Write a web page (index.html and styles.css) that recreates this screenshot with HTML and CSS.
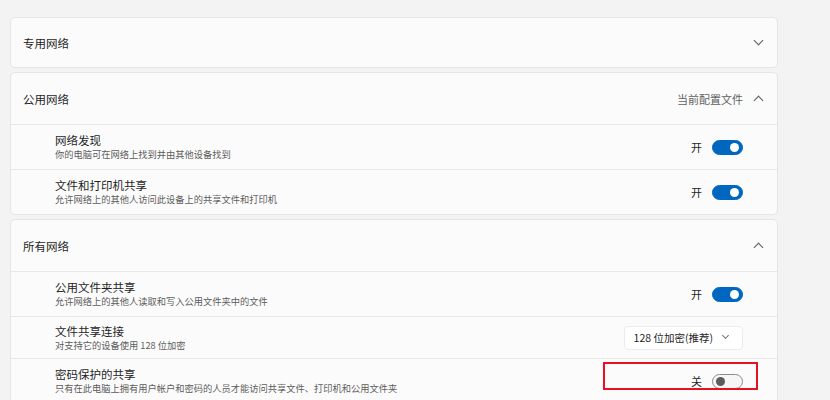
FILE: index.html
```html
<!DOCTYPE html>
<html lang="zh-CN">
  <head>
    <meta charset="UTF-8" />
    <meta name="viewport" content="width=device-width, initial-scale=1.0" />
    <title>高级共享设置</title>
    <link rel="stylesheet" href="styles.css">
  </head>
  <body>
    <div class="page">
      <div class="card">
        <div class="card-head first">
          <span class="head-title">专用网络</span>
          <span class="chevron down"></span>
        </div>
      </div>

      <div class="card">
        <div class="card-head">
          <span class="head-title">公用网络</span>
          <span class="head-note">当前配置文件</span>
          <span class="chevron up"></span>
        </div>
        <div class="row">
          <div class="row-text">
            <div class="row-title">网络发现</div>
            <div class="row-sub">你的电脑可在网络上找到并由其他设备找到</div>
          </div>
          <span class="state">开</span>
          <span class="toggle on"></span>
        </div>
        <div class="row">
          <div class="row-text">
            <div class="row-title">文件和打印机共享</div>
            <div class="row-sub">允许网络上的其他人访问此设备上的共享文件和打印机</div>
          </div>
          <span class="state">开</span>
          <span class="toggle on"></span>
        </div>
      </div>

      <div class="card">
        <div class="card-head">
          <span class="head-title">所有网络</span>
          <span class="chevron up"></span>
        </div>
        <div class="row">
          <div class="row-text">
            <div class="row-title">公用文件夹共享</div>
            <div class="row-sub">允许网络上的其他人读取和写入公用文件夹中的文件</div>
          </div>
          <span class="state">开</span>
          <span class="toggle on"></span>
        </div>
        <div class="row short">
          <div class="row-text">
            <div class="row-title">文件共享连接</div>
            <div class="row-sub">对支持它的设备使用 128 位加密</div>
          </div>
          <div class="select">
            <span>128 位加密(推荐)</span>
            <span class="chevron down small"></span>
          </div>
        </div>
        <div class="row">
          <div class="row-text">
            <div class="row-title">密码保护的共享</div>
            <div class="row-sub">只有在此电脑上拥有用户帐户和密码的人员才能访问共享文件、打印机和公用文件夹</div>
          </div>
          <span class="state">关</span>
          <span class="toggle"></span>
          <div class="highlight"></div>
        </div>
      </div>
    </div>
  </body>
</html>
```

FILE: styles.css
```css
body {
  margin: 0;
  background-color: #f3f3f3;
  font-family: "Noto Sans CJK SC", "Noto Sans", sans-serif;
  color: #1f1f1f;
  overflow: hidden;
}

.page {
  display: flex;
  flex-direction: column;
  gap: 4px;
  width: 768px;
  padding: 17px 0 0 10px;
}

.card {
  background-color: #fbfbfb;
  border: 1px solid #e5e5e5;
  border-radius: 5px;
}

.card-head {
  display: flex;
  align-items: center;
  height: 51px;
  padding: 0 13px 0 12px;
}

.card-head.first {
  height: 49px;
}

.head-title {
  flex: 1;
  font-size: 11.5px;
}

.head-note {
  font-size: 11px;
  color: #5f5f5f;
  margin-right: 12px;
}

.chevron {
  width: 6px;
  height: 6px;
  border-right: 1px solid #5a5a5a;
  border-bottom: 1px solid #5a5a5a;
}

.chevron.down {
  transform: translateY(-2px) rotate(45deg);
  margin-right: 2px;
}

.chevron.up {
  transform: translateY(2px) rotate(-135deg);
  margin-right: 2px;
}

.chevron.small {
  width: 4px;
  height: 4px;
  border-color: #777;
}

.row {
  position: relative;
  display: flex;
  align-items: center;
  height: 44px;
  padding: 0 34px 0 44px;
  border-top: 1px solid #e8e8e8;
}

.row.short {
  height: 41px;
}

.row-text {
  flex: 1;
}

.row-title {
  font-size: 11.5px;
  line-height: 15px;
}

.row-sub {
  font-size: 9.25px;
  line-height: 13px;
  color: #5d5d5d;
}

.state {
  font-size: 11px;
  margin-right: 10px;
}

.toggle {
  position: relative;
  width: 29px;
  height: 13px;
  border: 1px solid #8a8a8a;
  border-radius: 8px;
  background-color: #f6f6f6;
}

.toggle::after {
  content: "";
  position: absolute;
  top: 2px;
  left: 3px;
  width: 9px;
  height: 9px;
  border-radius: 50%;
  background-color: #5c5c5c;
}

.toggle.on {
  background-color: #0067c0;
  border-color: #0067c0;
}

.toggle.on::after {
  left: auto;
  right: 3px;
  background-color: #fff;
}

.select {
  display: flex;
  align-items: center;
  gap: 10px;
  height: 22px;
  padding: 0 12px 0 9px;
  background-color: #fff;
  border: 1px solid #ececec;
  border-radius: 4px;
  font-size: 10.5px;
}

.highlight {
  position: absolute;
  left: 592px;
  top: 3px;
  width: 151px;
  height: 24px;
  border: 2px solid #e81123;
}
```
